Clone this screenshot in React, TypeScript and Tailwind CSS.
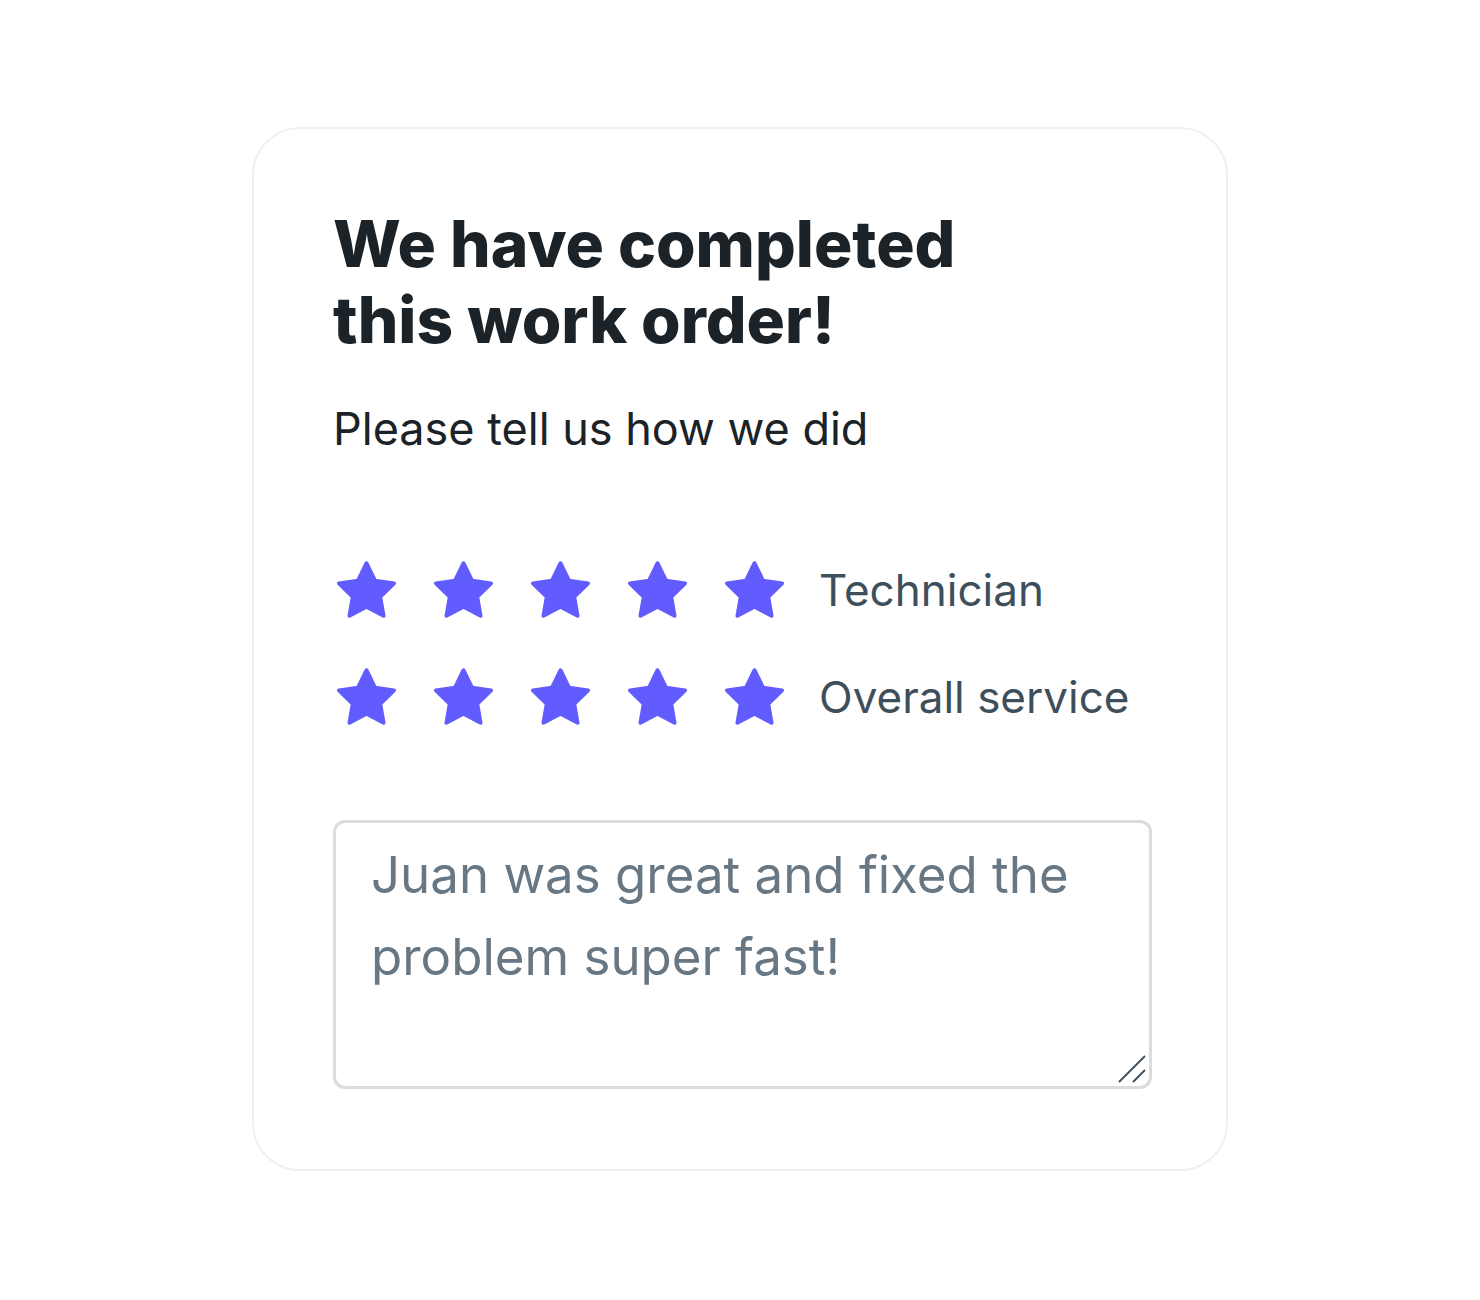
import React from "react";

function Star() {
    return (
        <svg width="59" height="57" viewBox="1.3 0.9 21.4 20.5" className="shrink-0">
            <path
                d="M12 1.6l3.1 6.3 6.9 1-5 4.9 1.2 6.9L12 17.4l-6.2 3.3 1.2-6.9-5-4.9 6.9-1z"
                fill="#625cff"
                stroke="#625cff"
                strokeWidth="1.4"
                strokeLinejoin="round"
            />
        </svg>
    );
}

function RatingRow({ label }: { label: string }) {
    return (
        <div className="flex items-center">
            <div className="flex gap-[38px]">
                {[0, 1, 2, 3, 4].map((i) => (
                    <Star key={i} />
                ))}
            </div>
            <span className="ml-[35px] text-[44px] leading-none text-[#3e4f5c]">
                {label}
            </span>
        </div>
    );
}

export default function App() {
    const [comment, setComment] = React.useState(
        "Juan was great and fixed the problem super fast!"
    );

    return (
        <div
            className="min-h-[1300px] bg-white pt-[127px]"
            style={{ fontFamily: "Inter, 'Open Sans', sans-serif" }}
        >
            <div className="mx-auto w-[976px] rounded-[48px] border-2 border-[#f0f0f0] pl-[79px] pr-[74px] pt-[77px] pb-[80px]">
                <h1 className="text-[64px] font-extrabold leading-[76px] text-[#1b2228]">
                    We have completed
                    <br />
                    this work order!
                </h1>
                <p className="mt-[48px] text-[45px] leading-none text-[#1b2228]">
                    Please tell us how we did
                </p>

                <div className="mt-[110px] ml-[4px] flex flex-col gap-[50px]">
                    <RatingRow label="Technician" />
                    <RatingRow label="Overall service" />
                </div>

                <div className="relative mt-[95px]">
                    <textarea
                        value={comment}
                        onChange={(e) => setComment(e.target.value)}
                        className="block h-[269px] w-full resize-none rounded-[12px] border-[3px] border-[#dcdcdc] px-[35px] py-[11px] text-[51px] leading-[82px] text-[#687784] outline-none"
                        style={{ fontFamily: "Inter, 'Open Sans', sans-serif" }}
                    />
                    <svg
                        width="30"
                        height="30"
                        viewBox="0 0 30 30"
                        className="pointer-events-none absolute bottom-[5px] right-[5px]"
                    >
                        <path d="M2 28L28 2M16 28L28 16" stroke="#3e4f5c" strokeWidth="1.8" />
                    </svg>
                </div>
            </div>
        </div>
    );
}
